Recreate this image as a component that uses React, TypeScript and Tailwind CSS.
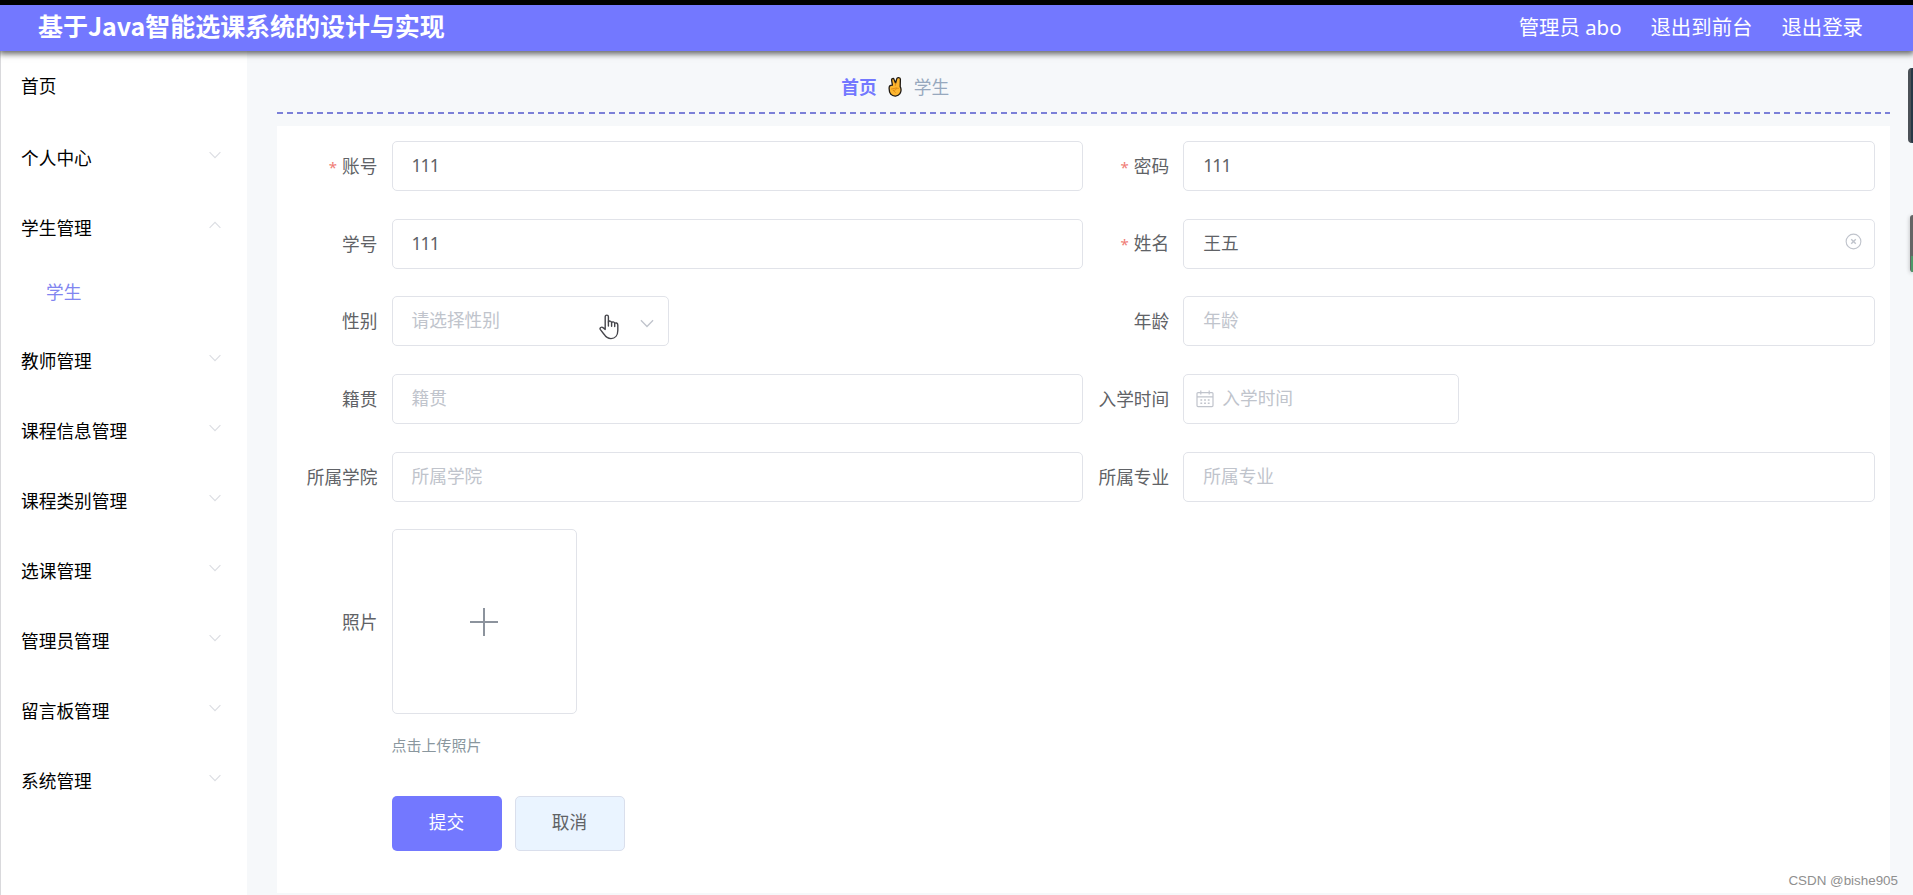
import type { ReactNode } from "react";
import clsx from "clsx";

type MenuItem = {
  label: string;
  children?: string[];
};

const menu: MenuItem[] = [
  { label: "个人中心" },
  { label: "学生管理", children: ["学生"] },
  { label: "教师管理" },
  { label: "课程信息管理" },
  { label: "课程类别管理" },
  { label: "选课管理" },
  { label: "管理员管理" },
  { label: "留言板管理" },
  { label: "系统管理" },
];

function Chevron({ up, className }: { up?: boolean; className?: string }) {
  return (
    <svg
      viewBox="0 0 12 8"
      fill="none"
      stroke="currentColor"
      strokeWidth="1.2"
      className={clsx(className, up && "rotate-180")}
    >
      <path d="M0.6 1.2 L6 6.6 L11.4 1.2" />
    </svg>
  );
}

function VictoryHand() {
  return (
    <svg viewBox="0 0 14 20" className="h-5 w-3.5" strokeLinejoin="round" strokeLinecap="round">
      <path
        d="M1.2 10.2 C1.2 8.8 2.6 8 4.4 8.2 L3.6 3 C3.4 1.4 5.6 0.9 6.1 2.4 L7.6 6.2 L8.7 1.8 C9.1 0.2 12.4 0.4 12.4 2.2 L12.2 9.6 C13.2 11.6 13 15 11.8 16.8 C10.2 19.6 5 19.8 2.8 17.2 C1.2 15.4 1 12.6 1.2 10.2 Z"
        fill="#fdb62f"
        stroke="#1f1a14"
        strokeWidth="1.3"
      />
      <path
        d="M7.6 6.2 L7.4 8.4 M3.4 12 L8.2 11 C9 12.4 7 13.6 5.2 13.4 M8.2 11 L10.4 11.4 M5.2 13.4 L7.4 15.4"
        fill="none"
        stroke="#d98512"
        strokeWidth="0.8"
      />
    </svg>
  );
}

function PointerHand({ className }: { className?: string }) {
  return (
    <svg
      viewBox="0 0 20 26"
      fill="#fff"
      stroke="#45454b"
      strokeWidth="1.4"
      strokeLinejoin="round"
      strokeLinecap="round"
      className={className}
    >
      <path d="M6.2 15 V2.8 C6.2 0.6 9.4 0.6 9.4 2.8 V8 C10 6.6 12.4 6.8 12.6 8.6 C13.2 7.4 15.4 7.6 15.7 9.4 C16.6 8.4 18.8 8.8 18.8 11 V16.4 C18.8 21.4 16 24.6 12 24.6 C8.4 24.6 6.6 22.8 5 20.2 L1.4 15.6 C0.2 13.8 2.6 12.4 4 13.6 L6.2 15.4" />
      <path d="M9.4 8 V12 M12.6 8.6 V12.2 M15.7 9.4 V12.6" fill="none" />
    </svg>
  );
}

function CalendarIcon() {
  return (
    <svg viewBox="0 0 18 18" fill="none" stroke="#c0c4cc" strokeWidth="1.2" className="h-[18px] w-[18px]">
      <rect x="1" y="2.6" width="16" height="14" rx="1" />
      <path d="M1 6.8 H17 M4.8 0.6 V4.4 M13.2 0.6 V4.4" />
      <path
        d="M4.4 10 H6.2 M8.1 10 H9.9 M11.8 10 H13.6 M4.4 13.2 H6.2 M8.1 13.2 H9.9 M11.8 13.2 H13.6"
        strokeWidth="1.5"
      />
    </svg>
  );
}

function ClearIcon() {
  return (
    <svg viewBox="0 0 18 18" fill="none" stroke="#c0c4cc" className="mb-1 h-[17px] w-[17px]">
      <circle cx="9" cy="9" r="7.8" strokeWidth="1.2" />
      <path d="M6.6 6.6 L11.4 11.4 M11.4 6.6 L6.6 11.4" strokeWidth="1.5" />
    </svg>
  );
}

function Field({ label, required, children }: { label: string; required?: boolean; children: ReactNode }) {
  return (
    <div className="mb-[27.7px] flex items-center">
      <div className="w-[100px] shrink-0 whitespace-nowrap pr-3.5 text-right text-[#606266]">
        {required && <span className="mr-[5px] text-[15px] text-[#f07c75]">*</span>}
        {label}
      </div>
      {children}
    </div>
  );
}

type BoxProps = {
  value?: string;
  placeholder?: string;
  prefix?: ReactNode;
  suffix?: ReactNode;
  className?: string;
};

function Box({ value, placeholder, prefix, suffix, className }: BoxProps) {
  return (
    <div
      className={clsx(
        "relative flex h-[50px] items-center rounded-[5px] border border-[#e1e3e9] bg-white pr-3",
        prefix ? "gap-2 pl-3" : "pl-[19px]",
        className ?? "w-full"
      )}
    >
      {prefix}
      <span
        className={clsx(
          "flex-1 pb-0.5",
          value ? "text-[#606266]" : "text-[#c0c4cc]",
          value === "111" && "tracking-[-1px]"
        )}
      >
        {value ?? placeholder}
      </span>
      {suffix}
    </div>
  );
}

function Sidebar() {
  return (
    <aside className="w-[246.5px] shrink-0 border-l border-[#d9d9dc] bg-white text-black">
      <div className="flex h-[72px] items-center pb-0.5 pl-5">首页</div>
      {menu.map((item) => (
        <div key={item.label}>
          <div className="flex h-[70.1px] items-center justify-between pl-5 pr-[26px]">
            <span className="pb-px">{item.label}</span>
            <Chevron up={!!item.children} className="mb-[7px] h-2 w-3 text-[#dcdee3]" />
          </div>
          {item.children?.map((child) => (
            <div key={child} className="flex h-[63px] items-center pb-1.5 pl-[45px] text-[#8185f0]">
              {child}
            </div>
          ))}
        </div>
      ))}
    </aside>
  );
}

export default function App() {
  return (
    <div className="relative flex h-[895px] w-full flex-col overflow-hidden bg-[#f6f8fa] font-['Noto_Sans','Noto_Sans_CJK_SC',sans-serif] text-[17.7px] leading-6">
      <header className="z-10 flex h-[51px] shrink-0 items-center justify-between border-t-[5px] border-black bg-[#7378ff] pl-[38px] pr-[50px] text-white shadow-[0_2px_6px_1px_rgba(0,0,0,0.6)]">
        <h1 className="pb-1.5 font-['Noto_Sans_CJK_SC',sans-serif] text-[25px] font-bold tracking-[-0.05px]">
          基于Java智能选课系统的设计与实现
        </h1>
        <nav className="flex gap-[29px] pb-0.5 text-[20.4px]">
          <span>管理员 abo</span>
          <span>退出到前台</span>
          <span>退出登录</span>
        </nav>
      </header>

      <div className="flex min-h-0 flex-1">
        <Sidebar />

        <main className="flex flex-1 flex-col pl-[30px] pr-[23px]">
          <div className="flex h-[61px] items-center justify-center gap-[11.5px] pr-[376px] pt-2.5">
            <span className="font-bold text-[#7378ff]">首页</span>
            <VictoryHand />
            <span className="text-[#97a8be]">学生</span>
          </div>
          <div className="h-0.5 bg-[repeating-linear-gradient(90deg,#7b80d8_0_6px,transparent_6px_10.05px)]" />

          <section className="mt-3 h-[767px] shrink-0 bg-white px-[15px] pt-[15px]">
            <div className="grid grid-cols-2">
              <Field label="账号" required>
                <Box value="111" />
              </Field>
              <Field label="密码" required>
                <Box value="111" />
              </Field>
              <Field label="学号">
                <Box value="111" />
              </Field>
              <Field label="姓名" required>
                <Box value="王五" suffix={<ClearIcon />} />
              </Field>
              <Field label="性别">
                <Box
                  placeholder="请选择性别"
                  className="w-[277px]"
                  suffix={
                    <>
                      <Chevron className="mr-0.5 mt-1 h-[9px] w-[14px] text-[#c0c4cc]" />
                      <PointerHand className="absolute left-[206px] top-[17px] h-[26px] w-5" />
                    </>
                  }
                />
              </Field>
              <Field label="年龄">
                <Box placeholder="年龄" />
              </Field>
              <Field label="籍贯">
                <Box placeholder="籍贯" />
              </Field>
              <Field label="入学时间">
                <Box placeholder="入学时间" className="w-[276px]" prefix={<CalendarIcon />} />
              </Field>
              <Field label="所属学院">
                <Box placeholder="所属学院" />
              </Field>
              <Field label="所属专业">
                <Box placeholder="所属专业" />
              </Field>
            </div>

            <Field label="照片">
              <div className="flex h-[185px] w-[185px] items-center justify-center rounded-[5px] border border-[#e1e3e9]">
                <svg viewBox="0 0 28 28" stroke="#8c939d" strokeWidth="2" className="h-7 w-7">
                  <path d="M14 0 V28 M0 14 H28" />
                </svg>
              </div>
            </Field>
            <p className="-mt-[9px] ml-[100px] text-[15px] text-[#8a979e]">点击上传照片</p>

            <div className="ml-[100px] mt-[38.5px] flex gap-[13px]">
              <button className="h-[55px] w-[110px] rounded-[5px] bg-[#7378ff] pb-0.5 text-white">提交</button>
              <button className="h-[55px] w-[110px] rounded-[5px] border border-[#dadfec] bg-[#eaf4ff] pb-0.5 text-[#606266]">
                取消
              </button>
            </div>
          </section>
        </main>
      </div>

      {/* edges of the floating desktop widgets */}
      <div className="absolute right-0 top-[68px] h-[75px] w-[5px] rounded-l-[4px] border-l-[3px] border-[#4b5157] bg-[#263846]" />
      <div className="absolute right-0 top-[215px] flex h-[57px] w-[3px] flex-col justify-end overflow-hidden rounded-l-[4px] bg-[#646464] shadow-[0_1px_4px_rgba(0,0,0,0.3)]">
        <div className="ml-px h-4 bg-[#4c9a68]" />
      </div>

      <div className="absolute bottom-1 right-[15px] font-['Liberation_Sans',sans-serif] text-[13.4px] leading-5 text-[#8f8f8f]">
        CSDN @bishe905
      </div>
    </div>
  );
}
